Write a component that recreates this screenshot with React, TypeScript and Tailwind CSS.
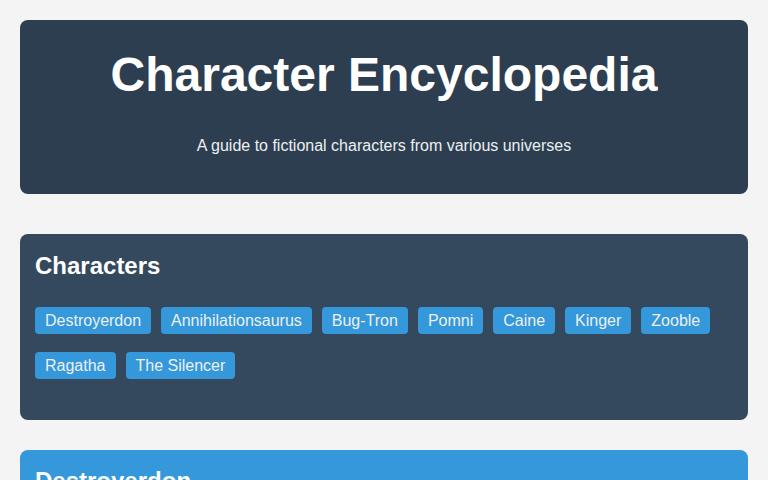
const characters = [
  "Destroyerdon",
  "Annihilationsaurus",
  "Bug-Tron",
  "Pomni",
  "Caine",
  "Kinger",
  "Zooble",
  "Ragatha",
  "The Silencer",
];

export default function App() {
  return (
    <div className="min-h-screen bg-[#f4f4f4] px-5 pt-5 font-['Liberation_Sans',Arial,sans-serif] text-white">
      {/* Header */}
      <header className="rounded-lg bg-[#2c3e50] px-5 pt-[27px] pb-[39px] text-center">
        <h1 className="text-[48px] font-bold leading-[55px]">Character Encyclopedia</h1>
        <p className="mt-[35px] text-base leading-[18px] text-[#ecf0f1]">
          A guide to fictional characters from various universes
        </p>
      </header>

      {/* Character list */}
      <section className="mt-10 rounded-lg bg-[#34495e] px-[15px] pt-[18px] pb-[41px]">
        <h2 className="text-2xl font-bold leading-[28px]">Characters</h2>
        <div className="mt-[27px] flex flex-wrap gap-x-[10px] gap-y-[18px]">
          {characters.map((name) => (
            <span
              key={name}
              className="rounded bg-[#3498db] px-[10px] py-[5px] text-base leading-[17px] text-[#ecf0f1]"
            >
              {name}
            </span>
          ))}
        </div>
      </section>

      {/* Detail */}
      <section className="mt-[30px] rounded-lg bg-[#3498db] px-[15px] pt-[17px] pb-6">
        <h2 className="text-2xl font-bold leading-[28px]">Destroyerdon</h2>
        <p className="mt-4 text-base leading-6">
          A colossal mechanical beast built for demolition.
        </p>
      </section>
    </div>
  );
}
